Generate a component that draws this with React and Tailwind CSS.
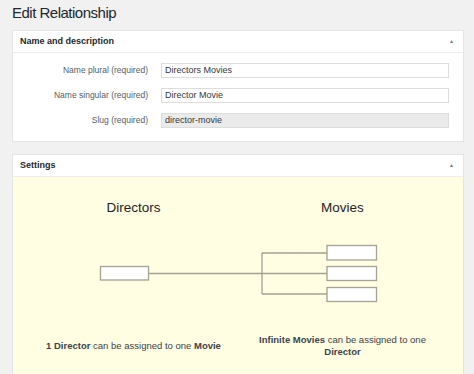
import React from "react";

const font = { fontFamily: '"Liberation Sans", Arial, sans-serif' };

function PanelHeader({ title }) {
  return (
    <div className="flex h-[22px] items-center justify-between border-b border-[#eeeeee] pl-[7px] pr-[9px]">
      <span className="text-[9px] font-bold text-[#23282d]">{title}</span>
      <span className="text-[5px] leading-none text-[#72777c]">▲</span>
    </div>
  );
}

function Field({ label, value, readOnly }) {
  return (
    <div className="flex items-center">
      <label className="w-[135px] text-right text-[8.5px] text-[#555d66]">{label}</label>
      <div
        className={
          "ml-[13px] flex h-[15px] w-[288px] items-center border border-[#dddddd] pl-[3px] text-[9px] text-[#32373c] " +
          (readOnly ? "bg-[#ebebeb]" : "bg-white")
        }
      >
        {value}
      </div>
    </div>
  );
}

function Diagram() {
  const stroke = "#a3a295";
  return (
    <svg width="450" height="65" viewBox="0 0 450 65" className="mt-[23px] block">
      <g fill="none" stroke={stroke} strokeWidth="1.3">
        <line x1="135.5" y1="32.5" x2="314" y2="32.5" />
        <line x1="249" y1="12" x2="249" y2="53" />
        <line x1="249" y1="12" x2="314" y2="12" />
        <line x1="249" y1="53" x2="314" y2="53" />
      </g>
      <g fill="#ffffff" stroke={stroke} strokeWidth="1.3">
        <rect x="87.5" y="25.5" width="48" height="13.5" />
        <rect x="314" y="4.5" width="49.5" height="14.5" />
        <rect x="314" y="25.5" width="49.5" height="14" />
        <rect x="314" y="46.5" width="49.5" height="14" />
      </g>
    </svg>
  );
}

export default function App() {
  return (
    <div className="h-[374px] w-[474px] overflow-hidden bg-[#f1f1f1]" style={font}>
      <h1 className="h-[30px] pl-3 text-[15px] leading-[25px] tracking-[-0.5px] text-[#23282d]">
        Edit Relationship
      </h1>

      <div className="ml-3 mr-[10px] border border-[#e5e5e5] bg-white">
        <PanelHeader title="Name and description" />
        <div className="flex flex-col gap-[10px] pb-[13px] pt-[10px]">
          <Field label="Name plural (required)" value="Directors Movies" />
          <Field label="Name singular (required)" value="Director Movie" />
          <Field label="Slug (required)" value="director-movie" readOnly />
        </div>
      </div>

      <div className="ml-3 mr-[10px] mt-3 border border-[#e5e5e5] bg-white">
        <PanelHeader title="Settings" />
        <div className="h-[220px] bg-[#fffde2] pt-[21px]">
          <div className="grid grid-cols-2 px-4 text-center text-[13.5px] leading-[20px] text-[#1d2327]">
            <div>Directors</div>
            <div>Movies</div>
          </div>
          <Diagram />
          <div className="mt-[28px] grid grid-cols-2 items-center px-4 text-center text-[9.5px] leading-[12px] text-[#3c434a]">
            <p className="mx-auto max-w-[195px]">
              <b>1 Director</b> can be assigned to one <b>Movie</b>
            </p>
            <p className="mx-auto max-w-[185px]">
              <b>Infinite Movies</b> can be assigned to one <b>Director</b>
            </p>
          </div>
        </div>
      </div>
    </div>
  );
}
